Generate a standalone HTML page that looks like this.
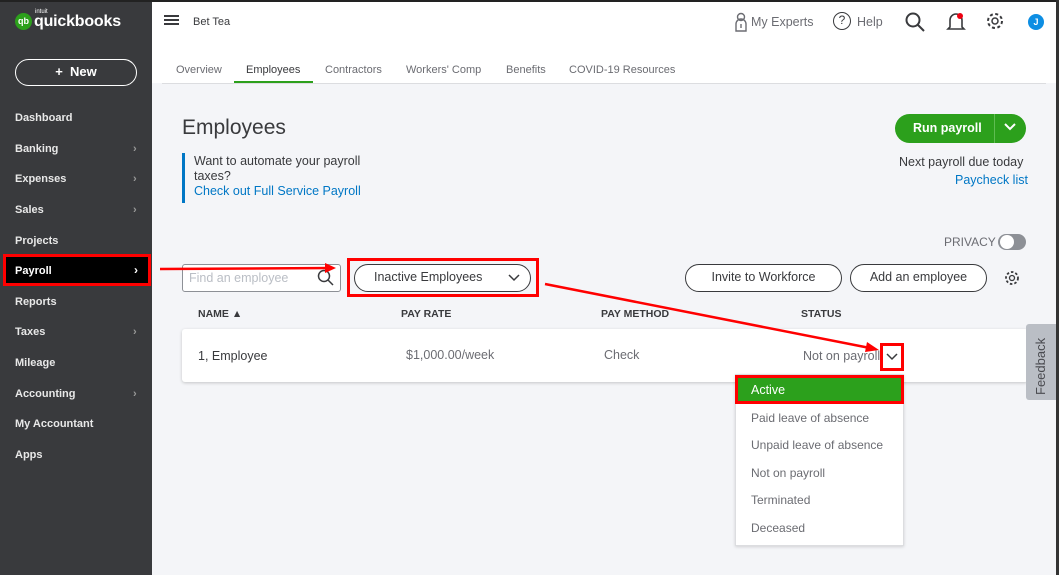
<!DOCTYPE html>
<html><head><style>
*{box-sizing:border-box;margin:0;padding:0}
body{width:1059px;height:575px;overflow:hidden;font-family:"Liberation Sans",Arial,sans-serif;background:#f4f5f8;position:relative;color:#393a3d}
.a{position:absolute}
#side{left:0;top:0;width:152px;height:575px;background:#393a3d;border-top:2px solid #222}
.nav{position:absolute;left:15px;font-size:11px;font-weight:bold;color:#e8e8e8}
.chev{position:absolute;right:12px;color:#999;font-size:11px}
#hdr{left:152px;top:0;width:904px;height:83px;background:#fff;border-top:2px solid #222}
.tab{position:absolute;top:62px;font-size:11px;color:#6b6c72}
.btn{position:absolute;border:1.5px solid #393a3d;border-radius:16px;background:#fff;font-size:12.5px;text-align:center;color:#393a3d}
.red{position:absolute;border:3px solid #f00}
.col{position:absolute;top:308px;font-size:10.5px;font-weight:bold;color:#393a3d}
.dd{position:absolute;left:751px;font-size:12px;color:#6b6c72}
</style></head><body>
<div id="side" class="a">
  <div class="a" style="left:15px;top:11px;width:17px;height:17px;border-radius:50%;background:#2ca01c;color:#fff;font-size:9px;font-weight:bold;text-align:center;line-height:17px">qb</div>
  <div class="a" style="left:35px;top:7px;color:#fff;font-size:6px">intuit</div>
  <div class="a" style="left:34px;top:11px;color:#fff;font-size:16px;font-weight:bold;letter-spacing:-0.2px">quickbooks</div>
  <div class="a" style="left:15px;top:57px;width:122px;height:27px;border:1.5px solid #fff;border-radius:14px;color:#fff;font-size:13px;font-weight:bold;text-align:center;line-height:24px">+&nbsp;&nbsp;New</div>
  <div class="nav" style="top:110px">Dashboard</div>
  <div class="nav" style="top:141px">Banking<span class="chev" style="left:118px">›</span></div>
  <div class="nav" style="top:171px">Expenses<span class="chev" style="left:118px">›</span></div>
  <div class="nav" style="top:202px">Sales<span class="chev" style="left:118px">›</span></div>
  <div class="nav" style="top:233px">Projects</div>
  <div class="a" style="left:3px;top:252px;width:148px;height:32px;background:#000;border:3px solid #f00"></div>
  <div class="nav" style="top:263px;color:#fff">Payroll</div><div class="a" style="left:134px;top:261px;color:#fff;font-size:12px;font-weight:bold">›</div>
  <div class="nav" style="top:294px">Reports</div>
  <div class="nav" style="top:324px">Taxes<span class="chev" style="left:118px">›</span></div>
  <div class="nav" style="top:355px">Mileage</div>
  <div class="nav" style="top:386px">Accounting<span class="chev" style="left:118px">›</span></div>
  <div class="nav" style="top:416px">My Accountant</div>
  <div class="nav" style="top:447px">Apps</div>
</div>
<div class="a" style="left:1056px;top:0;width:3px;height:575px;background:#333"></div>
<div id="hdr" class="a">
  <div class="a" style="left:12px;top:13px;width:15px;height:2px;background:#393a3d;box-shadow:0 4px 0 #393a3d,0 8px 0 #393a3d"></div>
  <div class="a" style="left:41px;top:14px;font-size:11px">Bet Tea</div>
  <svg class="a" style="left:582px;top:10px" width="14" height="20"><circle cx="7" cy="5" r="3.5" stroke="#6b6c72" stroke-width="1.4" fill="none"/><path d="M2 19v-7a5 5 0 0110 0v7z M7 12v4" stroke="#6b6c72" stroke-width="1.4" fill="none"/></svg>
  <div class="a" style="left:599px;top:13px;font-size:12.5px;color:#6b6c72">My Experts</div>
  <div class="a" style="left:681px;top:10px;width:18px;height:18px;border:1.5px solid #393a3d;border-radius:50%;font-size:12px;text-align:center;line-height:15px">?</div>
  <div class="a" style="left:705px;top:13px;font-size:12.5px;color:#6b6c72">Help</div>
  <svg class="a" style="left:752px;top:9px" width="22" height="22"><circle cx="9" cy="9" r="6.5" stroke="#393a3d" stroke-width="2" fill="none"/><path d="M14 14l6 6" stroke="#393a3d" stroke-width="2"/></svg>
  <svg class="a" style="left:794px;top:9px" width="20" height="22"><path d="M4 16V9a6 6 0 0112 0v7l2 2H2z" stroke="#393a3d" stroke-width="1.6" fill="none"/><circle cx="14" cy="5" r="3" fill="#e01"/></svg>
  <svg class="a" style="left:833px;top:9px" width="20" height="20"><circle cx="10" cy="10" r="7" stroke="#393a3d" stroke-width="2" stroke-dasharray="3 2.5" fill="none"/><circle cx="10" cy="10" r="3" stroke="#393a3d" stroke-width="1.5" fill="none"/></svg>
  <div class="a" style="left:876px;top:12px;width:16px;height:16px;border-radius:50%;background:#0d8ee3;color:#fff;font-size:9px;font-weight:bold;text-align:center;line-height:16px">J</div>
  <div class="tab" style="left:24px">Overview</div>
  <div class="tab" style="left:94px;color:#393a3d">Employees</div>
  <div class="a" style="left:82px;top:79px;width:79px;height:3px;background:#2ca01c"></div>
  <div class="tab" style="left:173px">Contractors</div>
  <div class="tab" style="left:254px">Workers' Comp</div>
  <div class="tab" style="left:354px">Benefits</div>
  <div class="tab" style="left:417px">COVID-19 Resources</div>
  <div class="a" style="left:10px;top:81px;width:884px;height:1px;background:#dcdde0"></div>
</div>
<div class="a" style="left:182px;top:116px;font-size:21px;color:#393a3d">Employees</div>
<div class="a" style="left:182px;top:153px;width:3px;height:50px;background:#0077c5"></div>
<div class="a" style="left:194px;top:154px;font-size:12.5px;line-height:15px">Want to automate your payroll<br>taxes?<br><span style="color:#0077c5">Check out Full Service Payroll</span></div>
<div class="a" style="left:895px;top:114px;width:131px;height:29px;background:#2ca01c;border-radius:15px"></div>
<div class="a" style="left:913px;top:121px;color:#fff;font-size:12.5px;font-weight:bold">Run payroll</div>
<div class="a" style="left:994px;top:114px;width:1px;height:29px;background:#5fbc52"></div>
<svg class="a" style="left:1003px;top:122px" width="14" height="10"><path d="M2 2l5 5 5-5" stroke="#fff" stroke-width="2" fill="none"/></svg>
<div class="a" style="left:899px;top:155px;font-size:12.5px">Next payroll due today</div>
<div class="a" style="left:955px;top:173px;font-size:12.5px;color:#0077c5">Paycheck list</div>
<div class="a" style="left:944px;top:235px;font-size:12px;color:#6b6c72">PRIVACY</div>
<div class="a" style="left:998px;top:234px;width:28px;height:16px;border-radius:8px;background:#8d9096"></div>
<div class="a" style="left:1000px;top:235px;width:14px;height:14px;border-radius:50%;background:#fff"></div>
<div class="a" style="left:182px;top:264px;width:159px;height:28px;background:#fff;border:1px solid #8d9096;border-radius:3px"></div>
<div class="a" style="left:189px;top:271px;font-size:12.5px;color:#babec5">Find an employee</div>
<svg class="a" style="left:317px;top:269px" width="18" height="18"><circle cx="7" cy="7" r="5.5" stroke="#393a3d" stroke-width="1.5" fill="none"/><path d="M11 11l5 5" stroke="#393a3d" stroke-width="1.5"/></svg>
<div class="btn" style="left:354px;top:264px;width:177px;height:28px;line-height:25px;text-align:left;padding-left:19px">Inactive Employees</div>
<svg class="a" style="left:508px;top:274px" width="12" height="8"><path d="M1 1l5 5 5-5" stroke="#393a3d" stroke-width="1.5" fill="none"/></svg>
<div class="red" style="left:347px;top:258px;width:192px;height:39px"></div>
<div class="btn" style="left:685px;top:264px;width:157px;height:28px;line-height:25px">Invite to Workforce</div>
<div class="btn" style="left:850px;top:264px;width:137px;height:28px;line-height:25px">Add an employee</div>
<svg class="a" style="left:1003px;top:269px" width="18" height="18"><circle cx="9" cy="9" r="6" stroke="#393a3d" stroke-width="1.8" stroke-dasharray="2.5 2" fill="none"/><circle cx="9" cy="9" r="2.5" stroke="#393a3d" stroke-width="1.3" fill="none"/></svg>
<div class="col" style="left:198px">NAME ▲</div>
<div class="col" style="left:401px">PAY RATE</div>
<div class="col" style="left:601px">PAY METHOD</div>
<div class="col" style="left:801px">STATUS</div>
<div class="a" style="left:182px;top:329px;width:846px;height:53px;background:#fff;border-radius:3px;box-shadow:0 1px 3px rgba(0,0,0,.2)"></div>
<div class="a" style="left:198px;top:349px;font-size:12.5px">1, Employee</div>
<div class="a" style="left:406px;top:348px;font-size:12.5px;color:#6b6c72">$1,000.00/week</div>
<div class="a" style="left:604px;top:348px;font-size:12.5px;color:#6b6c72">Check</div>
<div class="a" style="left:803px;top:349px;font-size:12.5px;color:#6b6c72">Not on payroll</div>
<div class="red" style="left:880px;top:343px;width:24px;height:28px"></div>
<svg class="a" style="left:886px;top:353px" width="12" height="8"><path d="M1 1l5 5 5-5" stroke="#393a3d" stroke-width="1.5" fill="none"/></svg>
<div class="a" style="left:1026px;top:324px;width:30px;height:76px;background:#babec5;border-radius:3px 0 0 3px"></div>
<div class="a" style="left:1033px;top:395px;transform:rotate(-90deg);transform-origin:0 0;font-size:13px;color:#4a4b50;white-space:nowrap">Feedback</div>
<div class="a" style="left:735px;top:374px;width:169px;height:172px;background:#fff;border:1px solid #dcdde0;box-shadow:0 1px 3px rgba(0,0,0,.15)"></div>
<div class="a" style="left:735px;top:375px;width:169px;height:29px;background:#2ca01c;border:3px solid #f00"></div>
<div class="dd" style="left:751px;top:383px;color:#fff;font-size:12.5px">Active</div>
<div class="dd" style="top:411px">Paid leave of absence</div>
<div class="dd" style="top:438px">Unpaid leave of absence</div>
<div class="dd" style="top:466px">Not on payroll</div>
<div class="dd" style="top:493px">Terminated</div>
<div class="dd" style="top:521px">Deceased</div>
<svg class="a" style="left:0;top:0" width="1059" height="575">
<path d="M160 269L332 268" stroke="#f00" stroke-width="2.5"/><path d="M336 268l-11-5v10z" fill="#f00"/>
<path d="M545 284L875 349" stroke="#f00" stroke-width="2.5"/><path d="M879 350l-12-8-2 10z" fill="#f00"/>
</svg>
</body></html>
